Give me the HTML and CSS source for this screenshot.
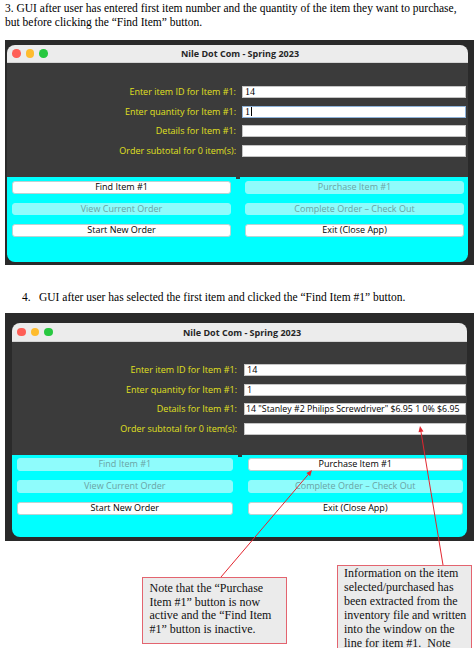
FILE: index.html
```html
<!DOCTYPE html>
<html lang="en">
<head>
<meta charset="utf-8">
<title>Nile Dot Com - GUI steps</title>
<link rel="stylesheet" href="styles.css">
</head>
<body>
  <p class="caption caption-3">3. GUI after user has entered first item number and the quantity of the item they want to purchase,<br>but before clicking the “Find Item” button.</p>

  <div class="shot shot-1">
    <div class="window">
      <div class="titlebar">
        <div class="lights"><span class="light red"></span><span class="light yellow"></span><span class="light green"></span></div>
        <div class="title">Nile Dot Com - Spring 2023</div>
        <div></div>
      </div>
      <div class="form">
        <div class="label">Enter item ID for Item #1:</div>
        <div class="field field-serif">14</div>
        <div class="label">Enter quantity for Item #1:</div>
        <div class="field field-serif field-focus">1<span class="caret"></span></div>
        <div class="label">Details for Item #1:</div>
        <div class="field"></div>
        <div class="label">Order subtotal for 0 item(s):</div>
        <div class="field"></div>
      </div>
      <div class="buttons">
        <div class="btn">Find Item #1</div>
        <div class="btn btn-off">Purchase Item #1</div>
        <div class="btn btn-off">View Current Order</div>
        <div class="btn btn-off">Complete Order – Check Out</div>
        <div class="btn">Start New Order</div>
        <div class="btn">Exit (Close App)</div>
      </div>
    </div>
  </div>

  <p class="caption caption-4"><span class="num">4.</span><span>GUI after user has selected the first item and clicked the “Find Item #1” button.</span></p>

  <div class="shot shot-2">
    <div class="window">
      <div class="titlebar">
        <div class="lights"><span class="light red"></span><span class="light yellow"></span><span class="light green"></span></div>
        <div class="title">Nile Dot Com - Spring 2023</div>
        <div></div>
      </div>
      <div class="form">
        <div class="label">Enter item ID for Item #1:</div>
        <div class="field">14</div>
        <div class="label">Enter quantity for Item #1:</div>
        <div class="field">1</div>
        <div class="label">Details for Item #1:</div>
        <div class="field field-tight">14 "Stanley #2 Philips Screwdriver" $6.95 1 0% $6.95</div>
        <div class="label">Order subtotal for 0 item(s):</div>
        <div class="field"></div>
      </div>
      <div class="buttons">
        <div class="btn btn-off">Find Item #1</div>
        <div class="btn">Purchase Item #1</div>
        <div class="btn btn-off">View Current Order</div>
        <div class="btn btn-off">Complete Order – Check Out</div>
        <div class="btn">Start New Order</div>
        <div class="btn">Exit (Close App)</div>
      </div>
    </div>
  </div>

  <div class="notes">
    <div class="note note-1">Note that the “Purchase<br>Item #1” button is now<br>active and the “Find Item<br>#1” button is inactive.</div>
    <div class="note note-2">Information on the item<br>selected/purchased has<br>been extracted from the<br>inventory file and written<br>into the window on the<br>line for item #1.&nbsp; Note</div>
  </div>

  <svg class="arrows" width="474" height="648" viewBox="0 0 474 648" aria-hidden="true">
    <line x1="221" y1="577" x2="308.5" y2="474.2" stroke="#e3262f" stroke-width="1"/>
    <polygon points="312,470 310.2,476.3 306.4,473.1" fill="#e3262f"/>
    <line x1="443" y1="565" x2="421" y2="432" stroke="#e3262f" stroke-width="1"/>
    <polygon points="420,426 423.5,431.5 418.5,432.3" fill="#e3262f"/>
  </svg>
</body>
</html>
```

FILE: styles.css
```css
* { box-sizing: border-box; }

html, body {
  margin: 0;
  padding: 0;
  overflow: hidden;
}

body {
  width: 474px;
  height: 648px;
  position: relative;
  background: #ffffff;
  color: #000000;
  font-family: "Liberation Serif", "Times New Roman", serif;
}

.caption {
  margin: 0;
  font-size: 11.5px;
  line-height: 14px;
}

.caption-3 {
  padding: 1px 0 0 5px;
}

.caption-4 {
  margin-top: 25px;
  padding-left: 22px;
  display: flex;
}

.caption-4 .num {
  width: 17px;
  flex: none;
}

.shot {
  margin-left: 5px;
  background: #2a2a2a;
}

.shot-1 {
  margin-top: 11px;
  padding: 5px 6px 3px 2px;
}

.shot-2 {
  margin-top: 9px;
  padding: 10px 7px 4px 7px;
}

.window {
  border-radius: 8px;
  overflow: hidden;
  font-family: "Open Sans", "DejaVu Sans", sans-serif;
}

.titlebar {
  display: grid;
  grid-template-columns: 1fr auto 1fr;
  align-items: center;
  background: #ececec;
  border-bottom: 1px solid #d4d4d4;
  padding-left: 5px;
}

.shot-1 .titlebar { height: 18px; }
.shot-2 .titlebar { height: 19px; }

.lights {
  display: flex;
  gap: 5px;
}

.light {
  width: 8.5px;
  height: 8.5px;
  border-radius: 50%;
}

.red { background: #fe5f57; }
.yellow { background: #febc2e; }
.green { background: #28c840; }

.title {
  font-weight: 700;
  font-size: 9px;
  color: #262626;
  white-space: nowrap;
}

.form {
  display: grid;
  grid-auto-rows: 12px;
  row-gap: 7.67px;
  align-content: start;
  background: #3b3b3b;
}

.shot-1 .form {
  height: 114px;
  padding-top: 23px;
  grid-template-columns: 229px 224px;
  column-gap: 6px;
}

.shot-2 .form {
  height: 113px;
  padding-top: 22px;
  grid-template-columns: 225px 222px;
  column-gap: 7px;
}

.label {
  color: #e0e020;
  font-size: 9px;
  line-height: 12px;
  text-align: right;
  white-space: nowrap;
}

.field {
  background: #ffffff;
  border: 1px solid #c4c4c4;
  padding-left: 2px;
  font-size: 9px;
  line-height: 10px;
  color: #000000;
  white-space: nowrap;
  overflow: hidden;
}

.field-tight {
  padding-left: 1px;
  font-size: 8.8px;
}

.field-serif {
  font-family: "Liberation Serif", serif;
  font-size: 10px;
}

.field-focus {
  border-color: #8fb3da;
}

.caret {
  display: inline-block;
  width: 1px;
  height: 9px;
  margin-left: 0.5px;
  vertical-align: -1px;
  background: #000000;
}

.buttons {
  position: relative;
  display: grid;
  grid-template-columns: 1fr 1fr;
  grid-auto-rows: 12.5px;
  align-content: start;
  background: #00ffff;
}

.buttons::before {
  content: "";
  position: absolute;
  top: -1px;
  left: calc(50% - 2px);
  width: 4px;
  height: 3px;
  background: #3b3b3b;
}

.shot-1 .buttons {
  height: 85px;
  padding: 4px 4px 0 5px;
  gap: 9px 14px;
}

.shot-2 .buttons {
  height: 82px;
  padding: 3px 4px 0 5px;
  gap: 9.5px 15px;
}

.btn {
  background: #ffffff;
  border: 1px solid #b9d3d3;
  border-radius: 3px;
  font-size: 9px;
  line-height: 10.5px;
  text-align: center;
  color: #000000;
  white-space: nowrap;
}

.btn-off {
  background: #8ffcfc;
  border-color: #8ffcfc;
  color: #6aa3a3;
}

.notes {
  display: flex;
  align-items: flex-start;
  margin-top: 24px;
  padding-left: 142px;
}

.note {
  flex: none;
  background: #ebebeb;
  border: 1.5px solid #e3646f;
  font-family: "Liberation Serif", "Times New Roman", serif;
  font-size: 12px;
  color: #111111;
  white-space: nowrap;
}

.note-1 {
  width: 145px;
  margin-top: 12px;
  padding: 4px 6px 7px 6.5px;
  line-height: 13.5px;
}

.note-2 {
  width: 135px;
  margin-left: 50px;
  padding: 0 5px 0 6px;
  line-height: 14px;
}

.arrows {
  position: absolute;
  top: 0;
  left: 0;
  pointer-events: none;
}
```
